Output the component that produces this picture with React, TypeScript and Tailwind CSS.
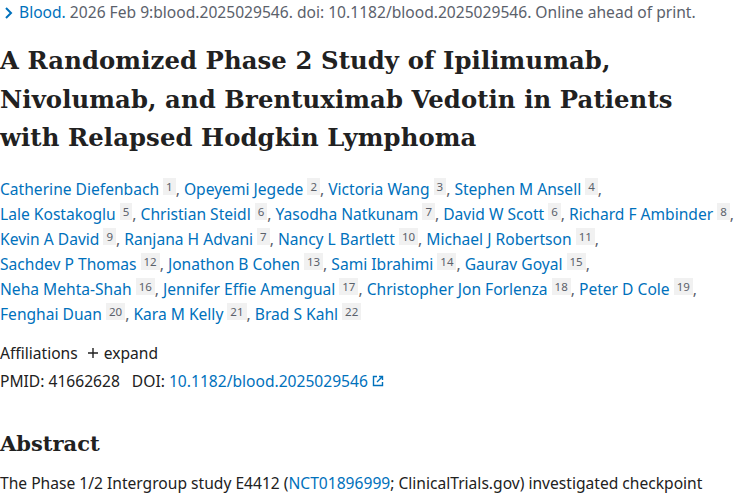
import React from "react";

const authors: [string, string][] = [
  ["Catherine Diefenbach", "1"],
  ["Opeyemi Jegede", "2"],
  ["Victoria Wang", "3"],
  ["Stephen M Ansell", "4"],
  ["Lale Kostakoglu", "5"],
  ["Christian Steidl", "6"],
  ["Yasodha Natkunam", "7"],
  ["David W Scott", "6"],
  ["Richard F Ambinder", "8"],
  ["Kevin A David", "9"],
  ["Ranjana H Advani", "7"],
  ["Nancy L Bartlett", "10"],
  ["Michael J Robertson", "11"],
  ["Sachdev P Thomas", "12"],
  ["Jonathon B Cohen", "13"],
  ["Sami Ibrahimi", "14"],
  ["Gaurav Goyal", "15"],
  ["Neha Mehta-Shah", "16"],
  ["Jennifer Effie Amengual", "17"],
  ["Christopher Jon Forlenza", "18"],
  ["Peter D Cole", "19"],
  ["Fenghai Duan", "20"],
  ["Kara M Kelly", "21"],
  ["Brad S Kahl", "22"],
];

const lines = [4, 5, 4, 4, 4, 3];

export default function App() {
  let idx = 0;
  const rows = lines.map((n) => {
    const r = authors.slice(idx, idx + n).map((a, i) => ({ a, last: idx + i === authors.length - 1 }));
    idx += n;
    return r;
  });
  return (
    <div className="w-[750px] h-[500px] overflow-hidden bg-white text-[#212121]" style={{ fontFamily: '"Noto Sans", sans-serif' }}>
      <div className="flex items-center h-[26px] text-[15.6px] text-[#5b616b]">
        <svg width="10" height="14" viewBox="0 0 10 14" className="ml-[4px] mr-[5px]">
          <path d="M2 2 L7 7 L2 12" fill="none" stroke="#0071bc" strokeWidth="2" />
        </svg>
        <span className="text-[#0071bc]">Blood.</span>
        <span>&nbsp;2026 Feb 9:blood.2025029546. doi: 10.1182/blood.2025029546. Online ahead of print.</span>
      </div>
      <h1
        className="mt-[16px] text-[24.3px] leading-[38.5px] font-bold text-[#212121] tracking-[0.1px]"
        style={{ fontFamily: '"DejaVu Serif", serif' }}
      >
        A Randomized Phase 2 Study of Ipilimumab,
        <br />
        Nivolumab, and Brentuximab Vedotin in Patients
        <br />
        with Relapsed Hodgkin Lymphoma
      </h1>
      <div className="mt-[19px] text-[15.6px] leading-[25px]">
        {rows.map((row, ri) => (
          <div key={ri} className="whitespace-nowrap">
            {row.map(({ a, last }, i) => (
              <span key={i}>
                <span className="text-[#0071bc]">{a[0]}</span>
                <span className="ml-[4px] inline-block align-top mt-[1px] px-[3px] bg-[#f1f1f1] text-[#5b616b] text-[11.5px] leading-[17px]">
                  {a[1]}
                </span>
                {!last && <span className="text-[#5b616b]">, </span>}
              </span>
            ))}
          </div>
        ))}
      </div>
      <div className="mt-[12px] text-[15.6px] leading-[28px]">
        <div className="flex items-center">
          <span>Affiliations</span>
          <svg width="12" height="12" viewBox="0 0 12 12" className="ml-[9px] mr-[5px]">
            <path d="M6 1 V11 M1 6 H11" stroke="#212121" strokeWidth="1.4" />
          </svg>
          <span>expand</span>
        </div>
        <div className="flex items-center">
          <span>PMID: 41662628</span>
          <span className="ml-[12px]">DOI:&nbsp;</span>
          <span className="text-[#0071bc]">10.1182/blood.2025029546</span>
          <svg width="12" height="12" viewBox="0 0 12 12" className="ml-[4px]">
            <path d="M5 1.5 H1.5 V10.5 H10.5 V7" fill="none" stroke="#0071bc" strokeWidth="1.4" />
            <path d="M7 1.5 H10.5 V5 M10.5 1.5 L5 7" fill="none" stroke="#0071bc" strokeWidth="1.4" />
          </svg>
        </div>
      </div>
      <h2 className="mt-[34px] text-[21px] leading-[30px] font-bold" style={{ fontFamily: '"DejaVu Serif", serif' }}>
        Abstract
      </h2>
      <div className="mt-[12px] text-[15.6px] leading-[25px] whitespace-nowrap">
        <div>
          The Phase 1/2 Intergroup study E4412 (<span className="text-[#0071bc]">NCT01896999</span>; ClinicalTrials.gov) investigated checkpoint
        </div>
        <div>blockade with ipilimumab and nivolumab in combination with brentuximab vedotin in patients</div>
      </div>
    </div>
  );
}
